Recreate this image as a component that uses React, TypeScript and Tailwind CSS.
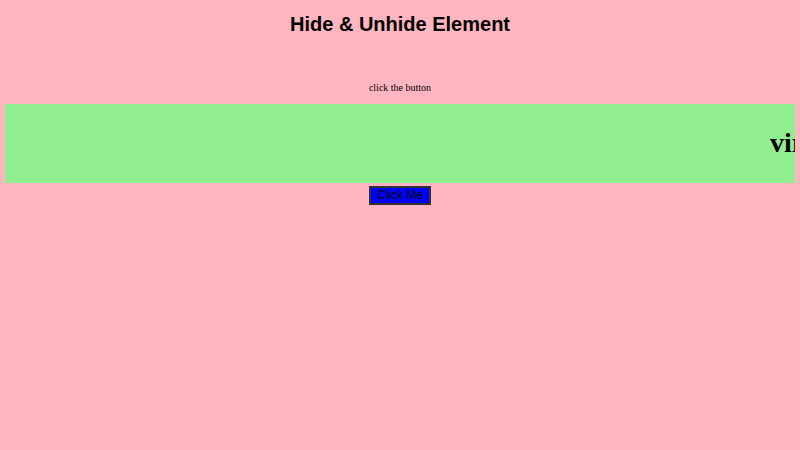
import { useState } from "react"

export default function App() {
    const [visible, setVisible] = useState(true)

    return (
        <main className="min-h-screen bg-[#ffb6c1] px-[5px] pt-3 text-center text-black font-['Liberation_Serif',serif]">
            <h1 className="text-[20px] leading-6 font-bold font-['Liberation_Sans',sans-serif]">
                Hide &amp; Unhide Element
            </h1>

            <p className="mt-11 text-[10px] leading-4">click the button</p>

            <div className="mt-2 h-[79px]">
                {visible && (
                    <div className="flex h-full items-center justify-end bg-[#90ee90] pb-0.5">
                        <h2 className="w-[25px] overflow-hidden whitespace-nowrap text-left text-[28px] leading-8 font-bold">vir</h2>
                    </div>
                )}
            </div>

            <button
                type="button"
                onClick={() => setVisible(!visible)}
                className="mx-auto mt-[3px] block border-2 border-[#333333] bg-[#0000ff] px-1.5 text-[12px] leading-[15px] font-['Liberation_Sans',sans-serif]"
            >
                Click Me
            </button>
        </main>
    )
}
